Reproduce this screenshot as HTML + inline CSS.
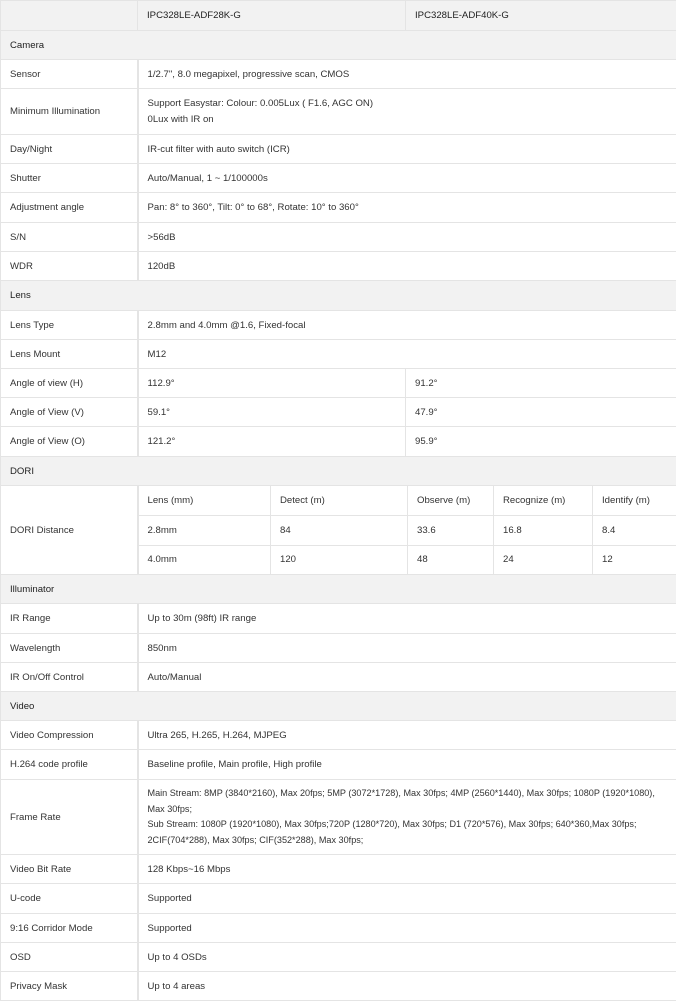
<!DOCTYPE html>
<html><head><meta charset="utf-8"><style>
*{margin:0;padding:0;box-sizing:border-box}
body{width:676px;height:1000px;overflow:hidden;background:#fff;font-family:"Liberation Sans",sans-serif;font-size:9.6px;color:#333}
table{border-collapse:collapse;table-layout:fixed;width:677px}
td{border:1px solid #e4e4e4;padding:0 0 0 9px;vertical-align:middle;white-space:nowrap;overflow:hidden}
tr.s td{background:#f2f2f2;color:#222}
tr.h td{background:#f2f2f2;color:#222}
td.l{border-right:2px solid #e4e4e4}
table.in{width:100%;height:100%}
table.in td{border:1px solid #e4e4e4;border-top:none}
table.in tr td:first-child{border-left:none}
table.in tr td:last-child{border-right:none}
table.in tr:last-child td{border-bottom:none}
td.nest{padding:0}
.fr{line-height:15.5px;font-size:9.1px}
</style></head><body>
<table>
<colgroup><col style="width:137px"><col style="width:268px"><col style="width:272px"></colgroup>
<tr class="h" style="height:30px"><td></td><td>IPC328LE-ADF28K-G</td><td>IPC328LE-ADF40K-G</td></tr>
<tr class="s" style="height:29px"><td colspan="3">Camera</td></tr>
<tr style="height:29px"><td class="l">Sensor</td><td colspan="2">1/2.7", 8.0 megapixel, progressive scan, CMOS</td></tr>
<tr style="height:46px"><td class="l">Minimum Illumination</td><td colspan="2" style="line-height:16px">Support Easystar: Colour: 0.005Lux ( F1.6, AGC ON)<br>0Lux with IR on</td></tr>
<tr style="height:29px"><td class="l">Day/Night</td><td colspan="2">IR-cut filter with auto switch (ICR)</td></tr>
<tr style="height:29px"><td class="l">Shutter</td><td colspan="2">Auto/Manual, 1 ~ 1/100000s</td></tr>
<tr style="height:30px"><td class="l">Adjustment angle</td><td colspan="2">Pan: 8° to 360°, Tilt: 0° to 68°, Rotate: 10° to 360°</td></tr>
<tr style="height:29px"><td class="l">S/N</td><td colspan="2">&gt;56dB</td></tr>
<tr style="height:29px"><td class="l">WDR</td><td colspan="2">120dB</td></tr>
<tr class="s" style="height:30px"><td colspan="3">Lens</td></tr>
<tr style="height:29px"><td class="l">Lens Type</td><td colspan="2">2.8mm and 4.0mm @1.6, Fixed-focal</td></tr>
<tr style="height:29px"><td class="l">Lens Mount</td><td colspan="2">M12</td></tr>
<tr style="height:29px"><td class="l">Angle of view (H)</td><td>112.9°</td><td>91.2°</td></tr>
<tr style="height:29px"><td class="l">Angle of View (V)</td><td>59.1°</td><td>47.9°</td></tr>
<tr style="height:30px"><td class="l">Angle of View (O)</td><td>121.2°</td><td>95.9°</td></tr>
<tr class="s" style="height:29px"><td colspan="3">DORI</td></tr>
<tr style="height:88px"><td class="l">DORI Distance</td><td colspan="2" class="nest">
<table class="in"><colgroup><col style="width:132px"><col style="width:137px"><col style="width:86px"><col style="width:99px"><col></colgroup>
<tr style="height:29px"><td>Lens (mm)</td><td>Detect (m)</td><td>Observe (m)</td><td>Recognize (m)</td><td>Identify (m)</td></tr>
<tr style="height:30px"><td>2.8mm</td><td>84</td><td>33.6</td><td>16.8</td><td>8.4</td></tr>
<tr style="height:29px"><td>4.0mm</td><td>120</td><td>48</td><td>24</td><td>12</td></tr>
</table></td></tr>
<tr class="s" style="height:29px"><td colspan="3">Illuminator</td></tr>
<tr style="height:30px"><td class="l">IR Range</td><td colspan="2">Up to 30m (98ft) IR range</td></tr>
<tr style="height:29px"><td class="l">Wavelength</td><td colspan="2">850nm</td></tr>
<tr style="height:29px"><td class="l">IR On/Off Control</td><td colspan="2">Auto/Manual</td></tr>
<tr class="s" style="height:29px"><td colspan="3">Video</td></tr>
<tr style="height:29px"><td class="l">Video Compression</td><td colspan="2">Ultra 265, H.265, H.264, MJPEG</td></tr>
<tr style="height:30px"><td class="l">H.264 code profile</td><td colspan="2">Baseline profile, Main profile, High profile</td></tr>
<tr style="height:75px"><td class="l">Frame Rate</td><td colspan="2" class="fr">Main Stream: 8MP (3840*2160), Max 20fps; 5MP (3072*1728), Max 30fps; 4MP (2560*1440), Max 30fps; 1080P (1920*1080),<br>Max 30fps;<br>Sub Stream: 1080P (1920*1080), Max 30fps;720P (1280*720), Max 30fps; D1 (720*576), Max 30fps; 640*360,Max 30fps;<br>2CIF(704*288), Max 30fps; CIF(352*288), Max 30fps;</td></tr>
<tr style="height:29px"><td class="l">Video Bit Rate</td><td colspan="2">128 Kbps~16 Mbps</td></tr>
<tr style="height:30px"><td class="l">U-code</td><td colspan="2">Supported</td></tr>
<tr style="height:29px"><td class="l">9:16 Corridor Mode</td><td colspan="2">Supported</td></tr>
<tr style="height:29px"><td class="l">OSD</td><td colspan="2">Up to 4 OSDs</td></tr>
<tr style="height:29px"><td class="l">Privacy Mask</td><td colspan="2">Up to 4 areas</td></tr>
</table>
</body></html>
